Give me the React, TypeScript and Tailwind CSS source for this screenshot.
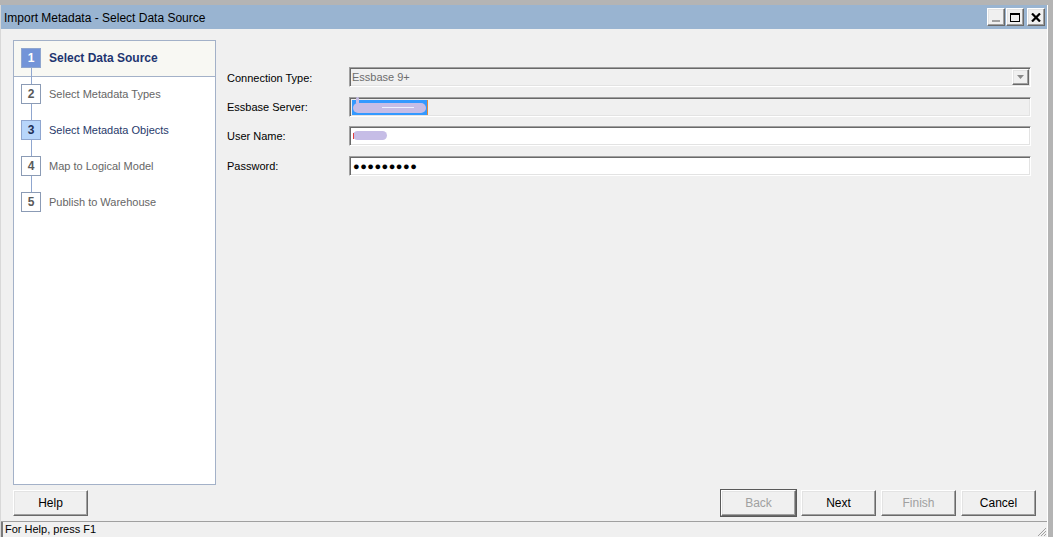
import React from "react";

const steps = [
  { n: 1, label: "Select Data Source", state: "active" },
  { n: 2, label: "Select Metadata Types", state: "idle" },
  { n: 3, label: "Select Metadata Objects", state: "next" },
  { n: 4, label: "Map to Logical Model", state: "idle" },
  { n: 5, label: "Publish to Warehouse", state: "idle" },
];

const sunken =
  "border border-t-[#a0a0a0] border-l-[#a0a0a0] border-r-white border-b-white shadow-[inset_1px_1px_0_#696969,inset_-1px_-1px_0_#e3e3e3]";

const raised =
  "border border-t-white border-l-white border-r-[#696969] border-b-[#696969] shadow-[inset_-1px_-1px_0_#a0a0a0,inset_1px_1px_0_#e3e3e3] bg-[#f0f0f0]";

const StepBox = ({ n, state }: { n: number; state: string }) => {
  const cls =
    state === "active"
      ? "bg-[#7394d8] border-[#8fa6cf] text-white"
      : state === "next"
      ? "bg-[#b8d6fb] border-[#8fa6cf] text-[#1f2f55]"
      : "bg-white border-[#8b9bb5] text-[#5a5a5a]";
  return (
    <div className={`relative z-10 w-[20px] h-[20px] border flex items-center justify-center text-[12px] font-bold ${cls}`}>
      {n}
    </div>
  );
};

const WizButton = ({ label, disabled, framed }: { label: string; disabled?: boolean; framed?: boolean }) => (
  <div
    className={`w-[75px] h-[26px] flex items-center justify-center text-[12px] ${raised} ${
      disabled ? "text-[#a0a0a0]" : "text-black"
    } ${framed ? "outline outline-1 outline-[#5a5a5a]" : ""}`}
  >
    {label}
  </div>
);

export default function App() {
  return (
    <div
      className="w-[1053px] h-[537px] flex flex-col bg-[#f0f0f0] overflow-hidden text-black"
      style={{ fontFamily: '"Liberation Sans", Arial, sans-serif' }}
    >
      <div className="h-[5px] bg-[#b4b4b4] shrink-0" />
      <div className="flex flex-1 min-h-0">
        <div className="flex-1 flex flex-col border-l border-[#d8d8d8]">
          {/* Title bar */}
          <div className="h-[24px] bg-[#99b4d1] flex items-center pl-[3px] pr-[2px]">
            <span className="text-[12px] flex-1 pt-px">Import Metadata - Select Data Source</span>
            <div className="flex items-center gap-[1px]">
              <div className={`w-[18px] h-[18px] ${raised} flex items-end justify-center pb-[3px]`}>
                <div className="w-[8px] h-[2px] bg-[#a0a0a0]" />
              </div>
              <div className={`w-[18px] h-[18px] ${raised} flex items-center justify-center`}>
                <div className="w-[10px] h-[9px] border border-black border-t-2" />
              </div>
              <div className={`ml-[2px] w-[18px] h-[18px] ${raised} flex items-center justify-center`}>
                <svg width="10" height="9" viewBox="0 0 10 9">
                  <path d="M1 0.5 L9 8.5 M9 0.5 L1 8.5" stroke="black" strokeWidth="2.2" />
                </svg>
              </div>
            </div>
          </div>

          {/* Body */}
          <div className="flex-1 flex flex-col pt-[11px] pl-[12px] pr-[11px]">
            <div className="flex">
              {/* Steps panel */}
              <div className="relative w-[203px] h-[445px] bg-white border border-[#a3b1c8]">
                <div className="absolute left-[17px] top-[17px] w-px h-[144px] bg-[#8fa6cf]" />
                {steps.map((s) => (
                  <div
                    key={s.n}
                    className={`h-[36px] flex items-start pt-[7px] pl-[7px] gap-[8px] ${
                      s.state === "active" ? "bg-[#f8f8f3] border-b border-[#a3b1c8] h-[35px]" : ""
                    }`}
                  >
                    <StepBox n={s.n} state={s.state} />
                    <span
                      className={`leading-[20px] ${
                        s.state === "active"
                          ? "text-[12px] font-bold text-[#1e3570]"
                          : s.state === "next"
                          ? "text-[11px] text-[#273a6b]"
                          : "text-[11px] text-[#666666]"
                      }`}
                    >
                      {s.label}
                    </span>
                  </div>
                ))}
              </div>

              {/* Form */}
              <div className="flex-1 pl-[11px] pr-[5px] pt-[27px] text-[11px]">
                <div className="flex items-center h-[20px]">
                  <span className="w-[122px] pt-[2px]">Connection Type:</span>
                  <div className={`flex-1 h-[20px] bg-[#f0f0f0] ${sunken} flex items-center pl-[2px] pr-[1px]`}>
                    <span className="flex-1 text-[#6d6d6d]">Essbase 9+</span>
                    <div className={`w-[17px] h-[16px] ${raised} flex items-center justify-center`}>
                      <svg width="7" height="4" viewBox="0 0 7 4">
                        <path d="M0 0 H7 L3.5 4 Z" fill="#8a8a8a" />
                      </svg>
                    </div>
                  </div>
                </div>

                <div className="flex items-center h-[20px] mt-[10px]">
                  <span className="w-[122px]">Essbase Server:</span>
                  <div className={`flex-1 h-[20px] bg-[#f0f0f0] ${sunken} flex items-center pl-[2px]`}>
                    <div className="relative w-[76px] h-[15px] bg-[#3399ff] border-r border-[#e08a3a]">
                      <div className="absolute left-[1px] top-[3px] w-[73px] h-[10px] rounded-[6px] bg-[#c6bde6]" />
                      <div className="absolute left-[4px] -top-[3px] w-[3px] h-[7px] rounded-full bg-[#c6bde6]" />
                      <div className="absolute left-[30px] top-[7px] w-[32px] h-px bg-[#eef2ff]" />
                    </div>
                  </div>
                </div>

                <div className="flex items-center h-[20px] mt-[9px]">
                  <span className="w-[122px]">User Name:</span>
                  <div className={`flex-1 h-[20px] bg-white ${sunken} flex items-center pl-[3px]`}>
                    <div className="relative w-[36px] h-[12px]">
                      <div className="absolute left-0 top-[1px] w-[34px] h-[9px] rounded-full bg-[#c6bde6]" />
                      <div className="absolute left-0 top-[3px] w-px h-[6px] bg-[#e04040]" />
                    </div>
                  </div>
                </div>

                <div className="flex items-center h-[20px] mt-[10px]">
                  <span className="w-[122px]">Password:</span>
                  <div className={`flex-1 h-[20px] bg-white ${sunken} flex items-center pl-[3px]`}>
                    <span className="text-[11px] tracking-[0.5px] leading-none">●●●●●●●●●</span>
                  </div>
                </div>
              </div>
            </div>

            {/* Buttons */}
            <div className="flex items-center mt-[5px]">
              <WizButton label="Help" />
              <div className="flex-1" />
              <div className="flex gap-[5px]">
                <WizButton label="Back" disabled framed />
                <WizButton label="Next" />
                <WizButton label="Finish" disabled />
                <WizButton label="Cancel" />
              </div>
            </div>
          </div>

          {/* Status bar */}
          <div className="h-[16px] mt-[5px] border-t border-[#a0a0a0] flex items-center relative">
            <div className="h-full border-l-2 border-[#7a7a7a] pl-[2px] flex items-center text-[11px]">
              For Help, press F1
            </div>
            <svg className="absolute right-0 bottom-0" width="11" height="11" viewBox="0 0 11 11">
              <path d="M10 2 L2 10 M10 5 L5 10 M10 8 L8 10" stroke="#a0a0a0" strokeWidth="1" />
            </svg>
          </div>
        </div>
        <div className="w-[6px] bg-[#b4b4b4] border-l border-white" />
      </div>
    </div>
  );
}
